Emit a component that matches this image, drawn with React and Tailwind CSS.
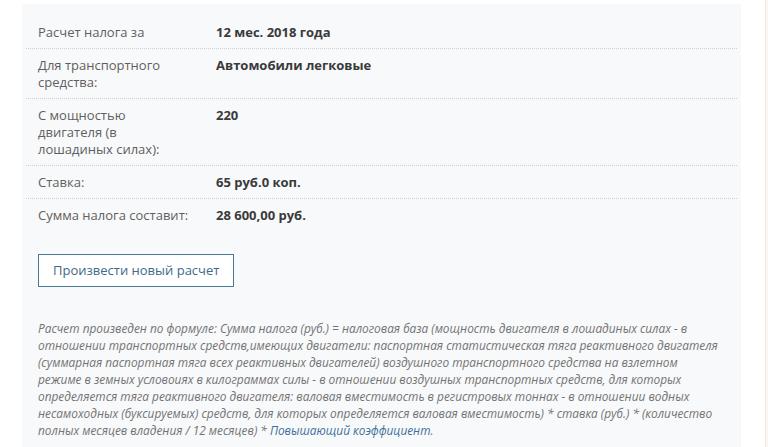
import React from 'react';

const rows = [
  { label: ['Расчет налога за'], value: '12 мес. 2018 года' },
  { label: ['Для транспортного', 'средства:'], value: 'Автомобили легковые' },
  { label: ['С мощностью', 'двигателя (в', 'лошадиных силах):'], value: '220' },
  { label: ['Ставка:'], value: '65 руб.0 коп.' },
  { label: ['Сумма налога составит:'], value: '28 600,00 руб.' },
];

const note = [
  'Расчет произведен по формуле: Сумма налога (руб.) = налоговая база (мощность двигателя в лошадиных силах - в',
  'отношении транспортных средств,имеющих двигатели: паспортная статистическая тяга реактивного двигателя',
  '(суммарная паспортная тяга всех реактивных двигателей) воздушного транспортного средства на взлетном',
  'режиме в земных условоиях в килограммах силы - в отношении воздушных транспортных средств, для которых',
  'определяется тяга реактивного двигателя: валовая вместимость в регистровых тоннах - в отношении водных',
  'несамоходных (буксируемых) средств, для которых определяется валовая вместимость) * ставка (руб.) * (количество',
];

export default function App() {
  return (
    <div className="min-h-screen bg-white flex" style={{ fontFamily: '"Open Sans", "Noto Sans", sans-serif' }}>
      <div className="w-[22px] shrink-0"></div>
      <div className="w-[719px] shrink-0 mt-[4px] bg-[#f8f9fa] pt-[12px] px-[4px] pb-4">
        {/* Result table */}
        <div>
          {rows.map((row, i) => (
            <div
              key={row.value}
              className={
                'grid grid-cols-[158px_1fr] gap-x-[20px] px-3 py-[7.5px] text-[13px] leading-[17px] ' +
                (i < rows.length - 1 ? 'border-b border-dotted border-[#d0d0d0]' : '')
              }
            >
              <div className="text-[#5f5f5f]">
                {row.label.map((l) => (
                  <div key={l} className="whitespace-nowrap">{l}</div>
                ))}
              </div>
              <div className="font-bold text-[#3a3a3a]">{row.value}</div>
            </div>
          ))}
        </div>

        <div className="px-3 mt-[23px]">
          <button className="h-[33px] px-[14px] border border-[#4a7a96] bg-white text-[13px] text-[#3e6a88]">
            Произвести новый расчет
          </button>
        </div>

        <p className="px-3 mt-[33px] text-[11.85px] leading-[17px] italic text-[#737373]">
          {note.map((line) => (
            <span key={line} className="block whitespace-nowrap">{line}</span>
          ))}
          <span className="block whitespace-nowrap">
            полных месяцев владения / 12 месяцев) * <span className="text-[#3d6f9e]">Повышающий коэффициент</span>.
          </span>
        </p>
      </div>
      <div className="flex-1"></div>
      <div className="w-[3px] shrink-0 bg-[#fbf6f2] border-l border-[#f3ece6]"></div>
    </div>
  );
}
